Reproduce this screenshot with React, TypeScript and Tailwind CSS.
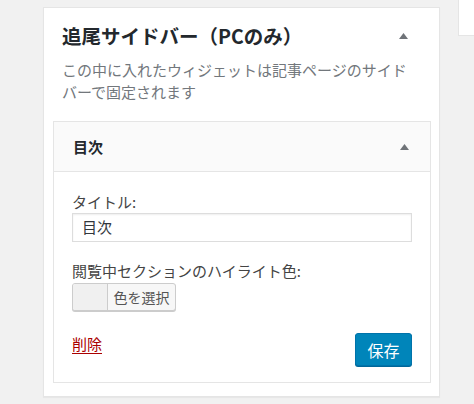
import React from 'react';

function Arrow() {
  return (
    <svg width="9" height="6" viewBox="0 0 9 6" className="shrink-0">
      <polygon points="0,6 4.5,0 9,6" fill="#6f7378" />
    </svg>
  );
}

export default function App() {
  return (
    <div className="w-[474px] h-[404px] bg-[#f1f1f1] flex items-start overflow-hidden font-['Noto_Sans_CJK_JP','Noto_Sans',sans-serif]">
      {/* Sidebar area panel */}
      <div className="ml-[43px] mt-[7px] w-[397px] h-[390px] bg-white border border-[#e5e5e5] shadow-[0_1px_1px_rgba(0,0,0,0.04)] flex flex-col">
        <div className="flex items-center justify-between pl-[18px] pr-[31px] pt-[16px]">
          <h2 className="text-[19.5px] leading-[24px] font-bold text-[#23282d]">追尾サイドバー（PCのみ）</h2>
          <Arrow />
        </div>
        <p className="ml-[18px] mt-[11px] w-[350px] text-[15px] leading-[22px] text-[#72777c]">
          この中に入れたウィジェットは記事ページのサイドバーで固定されます
        </p>

        {/* Widget */}
        <div className="ml-[9px] mr-[8px] mt-[18px] border border-[#e5e5e5] bg-white">
          <div className="h-[50px] flex items-center justify-between pl-[19px] pr-[21px] bg-[#fafafa] border-b border-[#e5e5e5]">
            <h3 className="text-[15px] leading-[22px] font-bold text-[#23282d]">目次</h3>
            <Arrow />
          </div>
          <div className="pl-[18px] pr-[18px] pt-[19px] pb-[16px] flex flex-col">
            <label className="text-[15px] leading-[22px] text-[#444]">タイトル:</label>
            <div className="h-[29px] border border-[#ddd] shadow-[inset_0_1px_2px_rgba(0,0,0,0.07)] pl-[9px] flex items-center text-[15px] text-[#32373c]">
              目次
            </div>
            <label className="mt-[18px] text-[15px] leading-[22px] text-[#444]">閲覧中セクションのハイライト色:</label>
            <div className="mt-[1px] w-[104px] h-[28px] flex border border-[#ccc] rounded-[3px] shadow-[0_1px_0_#ccc] bg-[#f7f7f7] overflow-hidden">
              <div className="w-[35px] h-full bg-[#f0f0f0] border-r border-[#ccc]" />
              <div className="flex-1 flex items-center justify-center text-[14px] text-[#555]">色を選択</div>
            </div>
            <div className="mt-[22px] flex items-start justify-between">
              <a className="text-[15px] leading-[22px] text-[#a00] underline underline-offset-[3px]">削除</a>
              <button className="w-[57px] h-[33px] rounded-[3px] bg-[#0085ba] border border-[#0073aa] shadow-[0_1px_0_#006799] text-white text-[16px] flex items-center justify-center">
                保存
              </button>
            </div>
          </div>
        </div>
      </div>

      {/* Next area, cut off at the edge */}
      <div className="ml-[18px] w-[16px] h-[36px] bg-white border-l border-b border-[#e5e5e5]" />
    </div>
  );
}
